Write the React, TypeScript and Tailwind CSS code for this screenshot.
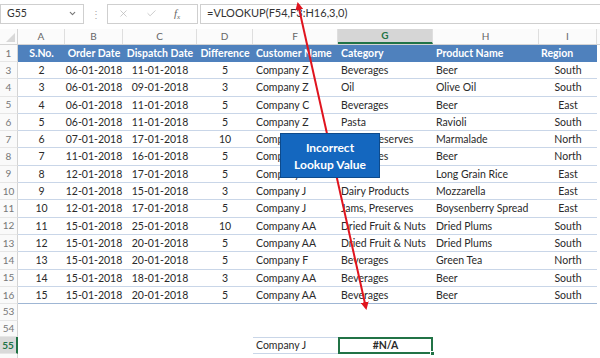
import { ChevronDown, X, Check } from "lucide-react";

const cols = [
    { key: "A", w: "w-[47px]", align: "text-center" },
    { key: "B", w: "w-[58px]", align: "text-center" },
    { key: "C", w: "w-[74px]", align: "text-center" },
    { key: "D", w: "w-[56px]", align: "text-center" },
    { key: "F", w: "w-[85px]", align: "text-left pl-[3px]" },
    { key: "G", w: "w-[95px]", align: "text-left pl-[3px]" },
    { key: "H", w: "w-[106px]", align: "text-left pl-[3px]" },
    { key: "I", w: "w-[58px]", align: "text-center" },
];

const headers = ["S.No.", "Order Date", "Dispatch Date", "Difference", "Customer Name", "Category", "Product Name", "Region"];

const rows = [
    ["2", "06-01-2018", "11-01-2018", "5", "Company Z", "Beverages", "Beer", "South"],
    ["3", "06-01-2018", "09-01-2018", "3", "Company Z", "Oil", "Olive Oil", "South"],
    ["4", "06-01-2018", "11-01-2018", "5", "Company C", "Beverages", "Beer", "East"],
    ["5", "06-01-2018", "11-01-2018", "5", "Company Z", "Pasta", "Ravioli", "South"],
    ["6", "07-01-2018", "17-01-2018", "10", "Company D", "Jams, Preserves", "Marmalade", "North"],
    ["7", "11-01-2018", "16-01-2018", "5", "Company D", "Beverages", "Beer", "North"],
    ["8", "12-01-2018", "17-01-2018", "5", "Company J", "Grains", "Long Grain Rice", "East"],
    ["9", "12-01-2018", "15-01-2018", "3", "Company J", "Dairy Products", "Mozzarella", "East"],
    ["10", "12-01-2018", "17-01-2018", "5", "Company J", "Jams, Preserves", "Boysenberry Spread", "East"],
    ["11", "15-01-2018", "25-01-2018", "10", "Company AA", "Dried Fruit & Nuts", "Dried Plums", "South"],
    ["12", "15-01-2018", "20-01-2018", "5", "Company AA", "Dried Fruit & Nuts", "Dried Plums", "South"],
    ["13", "15-01-2018", "20-01-2018", "5", "Company F", "Beverages", "Green Tea", "North"],
    ["14", "15-01-2018", "18-01-2018", "3", "Company AA", "Beverages", "Beer", "South"],
    ["15", "15-01-2018", "20-01-2018", "5", "Company AA", "Beverages", "Beer", "South"],
];

function RowNum({ n, active }: { n: string; active?: boolean }) {
    return (
        <div
            className={`w-[18px] shrink-0 flex items-center justify-center text-[10px] border-b border-[#e6e6e6] ${
                active
                    ? "bg-[#d9d9d9] text-[#217346] font-bold border-r-2 border-r-[#217346]"
                    : "bg-[#fafafa] text-[#777] border-r border-r-[#d4d4d4]"
            }`}
        >
            {n}
        </div>
    );
}

export default function App() {
    return (
        <div
            className="relative w-[600px] h-[358px] overflow-hidden bg-white text-[#2a2a2a]"
            style={{ fontFamily: "Lato, 'Open Sans', sans-serif" }}
        >
            {/* formula bar */}
            <div className="h-[26px] flex items-center pt-[1px]">
                <div className="w-[84px] h-[20px] border border-[#cfcfcf] flex items-center justify-between pl-[6px] pr-[6px] text-[10.5px] text-[#333]">
                    <span>G55</span>
                    <ChevronDown className="w-[9px] h-[9px] text-[#777]" strokeWidth={3} />
                </div>
                <div className="w-[23px] flex justify-center text-[#aaa] text-[10px] leading-none">⋮</div>
                <div className="w-[91px] h-[20px] border border-[#cfcfcf] flex items-center pl-[10px] gap-[17px] text-[#b5b5b5]">
                    <X className="w-[11px] h-[11px]" strokeWidth={1.5} />
                    <Check className="w-[11px] h-[11px]" strokeWidth={1.5} />
                    <span className="text-[11px] italic text-[#666]" style={{ fontFamily: "'Liberation Serif', serif" }}>
                        f<sub className="text-[7px]">x</sub>
                    </span>
                </div>
                <div className="flex-1 h-[20px] ml-[2px] border border-r-0 border-[#cfcfcf] flex items-center pl-[6px] text-[11px] text-[#333]">
                    =VLOOKUP(F54,F3:H16,3,0)
                </div>
            </div>

            {/* column headers */}
            <div className="mt-[3px] h-[16px] flex border-b border-[#d4d4d4] bg-[#fbfbfb]">
                <div className="w-[18px] shrink-0 relative border-r border-[#d4d4d4]">
                    <div className="absolute right-[2px] bottom-[2px] w-0 h-0 border-l-[9px] border-l-transparent border-b-[9px] border-b-[#d8d8d8]" />
                </div>
                {cols.map((c) => (
                    <div
                        key={c.key}
                        className={`${c.w} shrink-0 flex items-center justify-center text-[10px] border-r border-[#dedede] ${
                            c.key === "G" ? "bg-[#d6d6d6] text-[#217346] font-bold border-b-2 border-b-[#217346]" : "text-[#666]"
                        }`}
                    >
                        {c.key}
                    </div>
                ))}
            </div>

            {/* table header row */}
            <div className="h-[17px] flex">
                <RowNum n="1" />
                {headers.map((h, i) => (
                    <div
                        key={h}
                        className={`${cols[i].w} ${cols[i].align} shrink-0 bg-[#4f81bd] text-white font-bold text-[10.5px] leading-[17px] whitespace-nowrap ${
                            i === 7 ? "!text-left pl-[2px]" : ""
                        }`}
                    >
                        {h}
                    </div>
                ))}
            </div>

            {/* data rows */}
            {rows.map((r, ri) => (
                <div key={ri} className="h-[17.3px] flex">
                    <RowNum n={String(ri + 3)} />
                    {r.map((v, ci) => (
                        <div
                            key={ci}
                            className={`${cols[ci].w} ${cols[ci].align} shrink-0 text-[10.5px] leading-[17px] whitespace-nowrap overflow-hidden border-b ${
                                ri === rows.length - 1 ? "border-[#9fb6d4]" : "border-[#c9d6e8]"
                            }`}
                        >
                            {v}
                        </div>
                    ))}
                </div>
            ))}

            {/* rows 53-56 */}
            <div className="h-[16.5px] flex">
                <RowNum n="53" />
            </div>
            <div className="h-[16.5px] flex">
                <RowNum n="54" />
            </div>
            <div className="h-[17px] flex">
                <RowNum n="55" active />
                <div className="w-[235px] shrink-0" />
                <div className="w-[85px] shrink-0 border-y border-[#c9d6e8] text-[10.5px] leading-[15px] pl-[3px]">Company J</div>
                <div className="w-[95px] shrink-0 relative border-2 border-[#217346] text-[10.5px] font-bold leading-[13px] text-center">
                    #N/A
                    <div className="absolute -right-[4px] -bottom-[4px] w-[5px] h-[5px] bg-[#217346] border border-white" />
                </div>
            </div>
            <div className="h-[16px] flex">
                <RowNum n="" />
            </div>

            {/* arrow */}
            <svg className="absolute inset-0 pointer-events-none" width="600" height="358">
                <defs>
                    <marker id="ah" markerWidth="8" markerHeight="8" refX="6" refY="4" orient="auto-start-reverse" markerUnits="userSpaceOnUse">
                        <path d="M0,0 L8,4 L0,8 Z" fill="#e0141e" />
                    </marker>
                </defs>
                <line x1="298" y1="4" x2="366" y2="308" stroke="#e0141e" strokeWidth="2" markerStart="url(#ah)" markerEnd="url(#ah)" />
            </svg>

            {/* callout */}
            <div className="absolute left-[280px] top-[133px] w-[100px] h-[45px] bg-[#1467bf] border border-[#0d4a8c] flex flex-col items-center justify-center text-white font-bold text-[12px] leading-[17px]">
                <span>Incorrect</span>
                <span>Lookup Value</span>
            </div>
        </div>
    );
}
